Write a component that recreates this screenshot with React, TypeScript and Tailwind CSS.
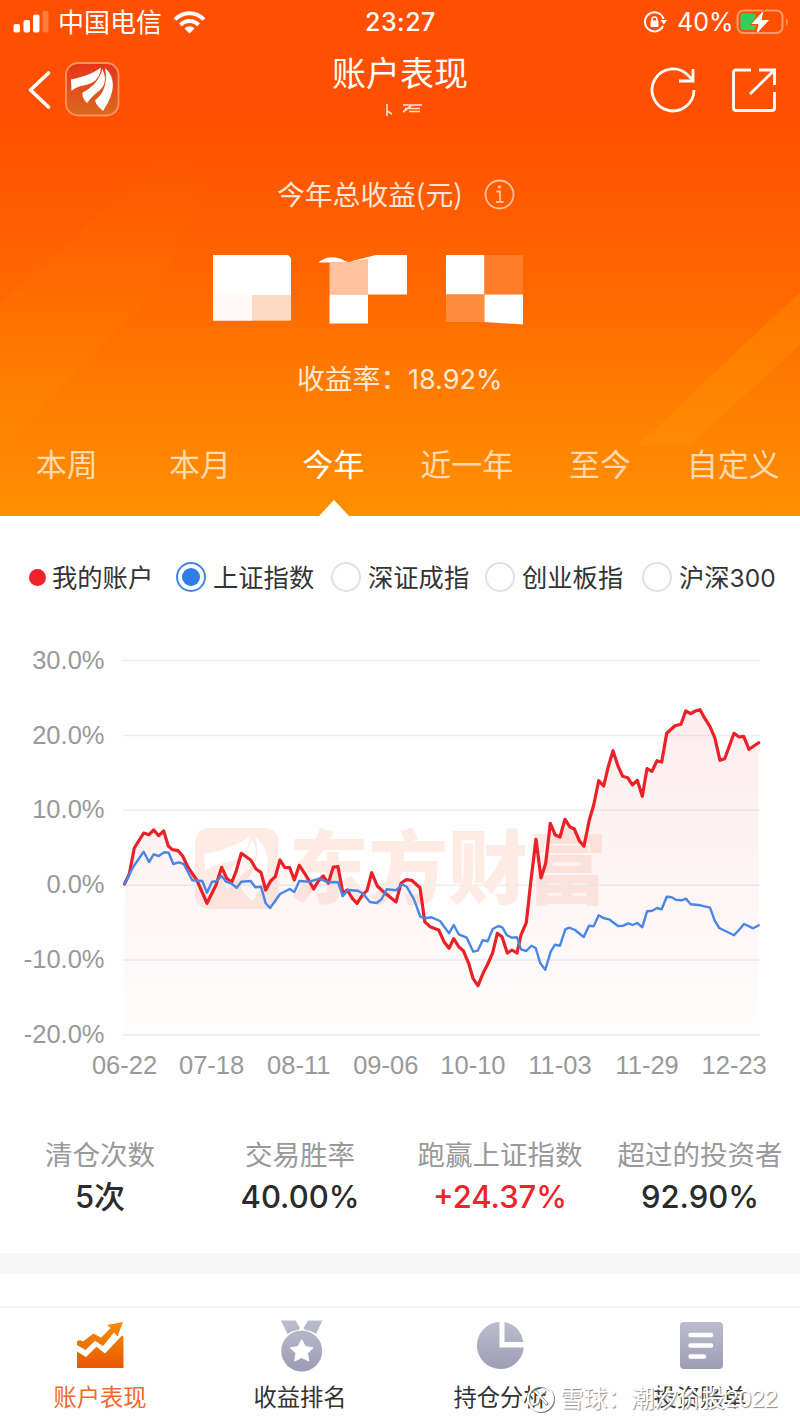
import React from "react";

interface Index {
  name: string;
  checked: boolean;
  width: string;
}

interface Stat {
  label: string;
  value: string;
  color: string;
}

const periods = ["本周", "本月", "今年", "近一年", "至今", "自定义"];

const indexes: Index[] = [
  { name: "上证指数", checked: true, width: "w-[155px]" },
  { name: "深证成指", checked: false, width: "w-[154px]" },
  { name: "创业板指", checked: false, width: "w-[157px]" },
  { name: "沪深300", checked: false, width: "w-[140px]" },
];

const stats: Stat[] = [
  { label: "清仓次数", value: "5次", color: "text-[#2b2b2b]" },
  { label: "交易胜率", value: "40.00%", color: "text-[#2b2b2b]" },
  { label: "跑赢上证指数", value: "+24.37%", color: "text-[#f0222b]" },
  { label: "超过的投资者", value: "92.90%", color: "text-[#2b2b2b]" },
];

const yTicks = [
  { label: "30.0%", y: 660.5 },
  { label: "20.0%", y: 735.5 },
  { label: "10.0%", y: 810.3 },
  { label: "0.0%", y: 885.3 },
  { label: "-10.0%", y: 960 },
  { label: "-20.0%", y: 1035 },
];

const xTicks = ["06-22", "07-18", "08-11", "09-06", "10-10", "11-03", "11-29", "12-23"];

const accountLine =
  "124.5,884 129.3,874 134.3,848 143.7,833 149,834.7 153.7,830 158.7,835.7 163.7,831 168.3,846 172.3,849.7 178,850.7 182.7,856 187.7,866.7 197.3,881 207,903.3 216,885 221.7,867.3 226.7,878.3 231.7,882.3 236,871.7 241.3,853.3 250.7,860 256,869 261,872.3 265.7,890 270.7,881 275.3,876.7 280,860 284.7,867.3 289.7,867.7 294.3,880 299.3,865.3 306.7,876.7 313.7,889 318.3,881 323.3,876 328.3,883.3 333.3,867 338,866.7 343,893.3 347.3,890 352.3,898.3 357,903.3 362.7,894.7 367,890.7 371.7,872.7 377.3,886 382.3,890.7 396,902 401,883.3 406,879.7 411.7,880.3 420,887.7 424.8,921.8 430,926.7 438.7,930 444,941.7 449,948.3 453.7,938.7 458.7,946.7 463.3,950.7 468.7,963.3 473,978.3 478,985.7 483,973.3 487.3,965 492.7,952.7 497.3,933.3 502,936.7 507.3,953 512,950 517,953 521,935 526.3,922.7 531,880 536,839.3 541,878 545.7,863.3 550.3,823.3 555.3,835 560,837 565,819.3 569.7,826.7 574.3,829 579.3,840.7 584,846.3 589.3,820 593.7,805 598.7,780.7 603.7,786 608.3,766.7 613,750.7 618,766 622.7,776.3 627.7,777.7 632.3,785 637.3,780.3 642.3,796.3 647,768.7 652,771.3 657,760.7 661.7,762 666.7,733.3 675,725.7 681,724.3 685.7,711 690.7,713.7 695.3,711 700,709.7 705,718.7 710,726.7 714.7,737.3 720,760.3 724.7,758.7 734,733.3 739,737 743.7,736.3 749,749.3 758.7,742.7";

const indexLine =
  "124.5,884 133.3,866.7 143.7,851.7 149,862 153.7,854.3 158.7,856 164.3,852.3 168.7,852.7 173.3,864 178.7,862.3 183.7,864 192.3,880.3 202.3,881 207,892.7 212,881.7 216,881.3 221.7,876 226,881.7 231.7,883.7 236.7,887.7 241.3,881.7 250.7,881 255.3,887.3 261,886.7 265.7,903.3 270,908 275.3,900.7 280,894 289.7,889 294.3,892 299.3,881 310,881.7 319,878.7 328.3,882.3 338,882 342.7,896.3 348,890 357.7,890.7 362.7,893.3 370,902 376.7,903 381.7,899 386.7,889.3 396,890.3 402,884.3 406.7,886.7 414,899.3 420.3,916.7 425,918.3 431.7,917.3 440,921 449,933.3 453.7,925 458.7,934.3 466.7,937.7 473.3,951.7 477.7,950.7 482.7,940.3 487.7,941.3 492.7,929 498.3,926 502.3,927.3 506.7,935 511.7,937.7 517,937.3 521,949.3 526.3,951 531.3,945.7 535.7,948 540.3,963.3 545.3,969.7 550.7,951.7 555,944.7 560,945.7 565.3,929.3 569.3,927.7 575,930 583.7,937 589,925.7 593.7,926.3 598.7,915.3 603.3,918 609,919.3 618,926 623.3,925.7 628.3,923.3 632.7,925 637.3,923 642.3,927.3 647,911.3 652.3,910.7 657,908 661.7,909.3 666.7,896.7 671.7,897.3 676,899.7 681.7,900.3 686,898.7 690.7,904.3 700.3,905.3 710,907.7 714.7,920.7 719.3,928 734,935.3 739,930 744,924 753.3,928.3 758.7,925.3";

function BrandStrokes({ fill }: { fill: string }) {
  return (
    <g fill={fill}>
      <path d="M6 17.500 C15 15.500 26 13 36 5.500 C35 18 27 22 18.500 23.500 C13.500 24.500 9.500 26 6.500 29 Z" />
      <path d="M37.500 7 C41.500 16 40.500 23 35 28 C30.500 31.500 26.500 35 22 41 C19 38 17 34.500 17.500 30.500 C27 26 34.500 18 37.500 7 Z" />
      <path d="M40 6 C48 13 49 22 47 30 C45 38 41 44 38 49 C35 46 31 43 30 38.500 C38.500 32 43 21 40 6 Z" />
    </g>
  );
}

function StatusBar() {
  return (
    <div className="relative flex h-[44px] items-center justify-between pl-[13px] pr-[11px] text-white">
      <div className="flex items-center">
        <svg width="36" height="22" viewBox="0 -2 36 22" fill="white">
          <rect x="0.500" y="11" width="6.500" height="8.500" rx="2" />
          <rect x="10.500" y="7" width="6.500" height="12.500" rx="2" />
          <rect x="20" y="1.500" width="6.500" height="18" rx="2" />
          <rect x="29.500" y="-2" width="6" height="21.500" rx="2" opacity="0.25" />
        </svg>
        <span className="ml-[9px] pb-[2px] text-[26px] leading-[42px]">中国电信</span>
        <svg className="ml-[11px]" width="33" height="24" viewBox="0 0 33 24" fill="none" stroke="white" strokeWidth="4">
          <path d="M2 9.500 C10 1 23 1 31 9.500" />
          <path d="M7.500 15 C12.500 9.800 20.500 9.800 25.500 15" />
          <path d="M11.500 18.500 C14.500 15.500 18.500 15.500 21.500 18.500 L16.500 23.500 Z" fill="white" stroke="none" />
        </svg>
      </div>
      <span className="absolute left-[365px] top-0 font-[Inter] text-[25px] font-medium leading-[44px] tracking-[0.5px]">23:27</span>
      <div className="flex items-center">
        <svg width="24" height="24" viewBox="0 0 24 24" fill="none" stroke="white">
          <path d="M20 16 A 9.500 9.500 0 1 1 20.500 9" strokeWidth="2" />
          <path d="M17.500 10 H24 L20.800 14.500 Z" fill="white" stroke="none" />
          <rect x="7.500" y="10.500" width="8" height="6.500" rx="1" fill="white" stroke="none" />
          <path d="M9 11 V9.500 A2.500 2.500 0 0 1 14 9.500 V11" strokeWidth="1.500" />
        </svg>
        <span className="ml-[10px] w-[55px] whitespace-nowrap font-[Inter] text-[25px] leading-[44px]">40%</span>
        <svg className="ml-[4px]" width="53" height="28" viewBox="0 0 53 28">
          <rect x="1.500" y="2.500" width="45" height="22.500" rx="6" fill="none" stroke="#ff9a6c" strokeWidth="2" />
          <path d="M50 10 C52.500 11.500 52.500 16 50 17.500 Z" fill="#ff9a6c" />
          <rect x="4.500" y="5.500" width="15" height="16.500" rx="2" fill="#30d158" />
          <path d="M28.500 1 L14.500 16.500 H22 L19.500 27.500 L34 11.500 H26 Z" fill="white" stroke="#ff4f00" strokeWidth="1" />
        </svg>
      </div>
    </div>
  );
}

function NavBar() {
  return (
    <div className="flex h-[86px] text-white">
      <div className="flex w-[260px] pl-[27px] pt-[18px]">
        <svg className="mt-[8px]" width="26" height="40" viewBox="0 0 26 40" fill="none" stroke="white" strokeWidth="3.600" strokeLinecap="round" strokeLinejoin="round">
          <path d="M21.500 3 L3.500 20 L21.500 37" />
        </svg>
        <svg className="ml-[12px]" width="55" height="55" viewBox="0 0 55 55">
          <defs>
            <linearGradient id="brand" x1="0" y1="0" x2="0" y2="1">
              <stop offset="0" stopColor="#e5341b" />
              <stop offset="1" stopColor="#dc6a1d" />
            </linearGradient>
          </defs>
          <rect x="1" y="1" width="52.500" height="52.500" rx="12" fill="url(#brand)" stroke="#ff9460" strokeWidth="1.800" />
          <BrandStrokes fill="white" />
        </svg>
      </div>
      <div className="flex w-[280px] flex-col items-center">
        <h1 className="pb-[3px] text-[34px] leading-[55px]">账户表现</h1>
        {/* Masked account name */}
        <svg className="ml-[7px]" width="40" height="14" viewBox="0 0 40 14" fill="none" stroke="#ffe3d6" strokeWidth="1.600">
          <path d="M3 2 V14 M3 9 L8 12" />
          <path d="M19 3 H38 M21 6.500 H36 M28 3 L19 10 M25 9.500 H36" />
        </svg>
      </div>
      <div className="flex w-[260px] justify-end pr-[23px] pt-[23px]">
        <svg width="46" height="46" viewBox="0 0 46 46" fill="none" stroke="white" strokeWidth="2.800">
          <path d="M44 23 A 21 21 0 1 1 38 8.200 L43 13" />
          <path d="M43 2 V14 H29" />
        </svg>
        <svg className="ml-[35px]" width="46" height="46" viewBox="0 0 46 46" fill="none" stroke="white" strokeWidth="2.800">
          <path d="M20 3 H5 Q2.500 3 2.500 5.500 V41 Q2.500 43.500 5 43.500 H41 Q43.500 43.500 43.500 41 V25" />
          <path d="M28 3 H43.500 V18 M43 3.500 L19 27" />
        </svg>
      </div>
    </div>
  );
}

function Header() {
  return (
    <header className="relative h-[516px] bg-[linear-gradient(180deg,#ff4f00_0px,#ff4f00_110px,#ff6700_290px,#ff7a00_380px,#ff8f00_516px)]">
      <svg className="absolute left-0 top-0" width="800" height="516" viewBox="0 0 800 516">
        <defs>
          <linearGradient id="beam" x1="0" y1="0" x2="0" y2="1">
            <stop offset="0" stopColor="#ff9500" stopOpacity="0" />
            <stop offset="1" stopColor="#ff9500" stopOpacity="0.35" />
          </linearGradient>
        </defs>
        <path d="M180 140 L0 305 V450 L160 285 L205 185 Z" fill="url(#beam)" opacity="0.5" />
        <path d="M800 292 L638 445 H690 L800 345 Z" fill="#ff9500" opacity="0.35" />
      </svg>
      <div className="relative flex h-full flex-col">
        <StatusBar />
        <NavBar />
        <div className="mt-[44px] flex h-[40px] items-center pl-[277px] text-[#ffe6d8]">
          <span className="w-[207px] whitespace-nowrap pb-[2px] text-[27.800px] leading-[38px]">今年总收益(元)</span>
          <svg width="31" height="31" viewBox="0 0 31 31" fill="none" stroke="#ffc09a" strokeWidth="1.800">
            <circle cx="15.500" cy="15.500" r="14" />
            <path d="M12.500 12.500 H16 V22.500 M12 23 H19.500" />
            <circle cx="15.500" cy="8" r="1.800" fill="#ffc09a" stroke="none" />
          </svg>
        </div>
        {/* Amount hidden behind mosaic blocks */}
        <svg className="mt-[37px] shrink-0" width="800" height="78" viewBox="0 251 800 78">
          <path d="M213 255 H288 L291 258 V320.500 H213 Z" fill="white" />
          <rect x="213" y="295" width="39" height="25.500" fill="#fffaf7" />
          <rect x="252" y="295" width="39" height="25" fill="#fdd9c2" />
          <path d="M318 262.500 Q331 253 345 261 L350 262.500 Z" fill="white" />
          <path d="M329.500 262.500 H346 L368 258 V294.500 H329.500 Z" fill="#ffc29f" />
          <path d="M350 261.500 L376 255 H407 V294.500 H368 V259 Z" fill="white" />
          <rect x="329.500" y="294.500" width="38.500" height="29" fill="white" />
          <rect x="446" y="255" width="38.500" height="39.500" fill="white" />
          <rect x="484.500" y="255" width="38.500" height="39.500" fill="#ff7d2b" />
          <rect x="446" y="294.500" width="38.500" height="27.500" fill="#ff8e3c" />
          <path d="M484.500 294.500 H523 V324.500 L484.500 322 Z" fill="white" />
        </svg>
        <div className="mt-[30px] flex h-[40px] items-center pl-[297px] text-[27.800px] leading-[37px] text-[#ffe9d6]">
          <span className="w-[111px] whitespace-nowrap pb-[3px]">收益率：</span>
          <span className="font-[Inter] text-[27px]">18.92%</span>
        </div>
        <nav className="mt-[34px] grid grid-cols-6">
          {periods.map((period) => (
            <div
              key={period}
              className={`whitespace-nowrap text-center text-[31px] leading-[60px] ${
                period === "今年" ? "text-white" : "text-[#ffd9b0]"
              }`}
            >
              {period}
            </div>
          ))}
        </nav>
      </div>
      <svg className="absolute bottom-0 left-[318px]" width="32" height="16" viewBox="0 0 32 16">
        <path d="M1 16 L16 0 L31 16 Z" fill="white" />
      </svg>
    </header>
  );
}

function Legend() {
  return (
    <div className="flex h-[122px] items-center pl-[29px] text-[25.300px] leading-[38px] text-[#333333]">
      <div className="flex w-[147px] items-center gap-[6px] whitespace-nowrap">
        <span className="h-[17px] w-[17px] rounded-full bg-[#f0222b]" />
        <span className="pb-[2px]">我的账户</span>
      </div>
      {indexes.map((index) => (
        <div key={index.name} className={`flex shrink-0 items-center gap-[7px] whitespace-nowrap ${index.width}`}>
          <span
            className={`flex h-[30px] w-[30px] shrink-0 items-center justify-center rounded-full border-2 ${
              index.checked ? "border-[#4186e8]" : "border-[#dfe0e8]"
            }`}
          >
            {index.checked && <span className="h-[18px] w-[18px] rounded-full bg-[#2f7de6]" />}
          </span>
          {index.name === "沪深300" ? (
            <span>
              沪深<span className="font-[Inter] text-[24.500px]">300</span>
            </span>
          ) : (
            <span className="pb-[2px]">{index.name}</span>
          )}
        </div>
      ))}
    </div>
  );
}

function Chart() {
  return (
    <svg className="block" width="800" height="452" viewBox="0 638 800 452">
      <defs>
        <linearGradient id="area" gradientUnits="userSpaceOnUse" x1="0" y1="710" x2="0" y2="1035">
          <stop offset="0" stopColor="#f0222b" stopOpacity="0.08" />
          <stop offset="1" stopColor="#f0222b" stopOpacity="0.01" />
        </linearGradient>
      </defs>
      <g transform="translate(195 828) scale(1.52 1.5)">
        <rect width="55" height="54" rx="9" fill="#fdebe4" />
        <BrandStrokes fill="white" />
      </g>
      <text x="289" y="897" fontSize="79.500" fontWeight="900" fill="#fdebe4">
        东方财富
      </text>
      {yTicks.map((tick) => (
        <g key={tick.label}>
          <line x1="123" x2="760" y1={tick.y} y2={tick.y} stroke="#ededf2" strokeWidth="1.500" />
          <text x="104.500" y={tick.y + 8} textAnchor="end" fontSize="25.500" fill="#999999" fontFamily="Liberation Sans, sans-serif">
            {tick.label}
          </text>
        </g>
      ))}
      <polygon points={`${accountLine} 758.7,1035 124.5,1035`} fill="url(#area)" />
      <polyline points={accountLine} fill="none" stroke="#ea2127" strokeWidth="3.200" strokeLinejoin="round" strokeLinecap="round" />
      <polyline points={indexLine} fill="none" stroke="#4a86e6" strokeWidth="2.400" strokeLinejoin="round" strokeLinecap="round" />
      {xTicks.map((label, i) => (
        <text key={label} x={124.5 + i * 87.1} y="1073.500" textAnchor="middle" fontSize="25.500" fill="#999999" fontFamily="Liberation Sans, sans-serif">
          {label}
        </text>
      ))}
    </svg>
  );
}

function Stats() {
  return (
    <div className="grid h-[163px] grid-cols-4 pt-[43px]">
      {stats.map((stat) => (
        <div key={stat.label} className="flex flex-col items-center whitespace-nowrap">
          <span className="pb-[2px] text-[27.500px] leading-[40px] text-[#999999]">{stat.label}</span>
          <span className={`font-[Inter,'Noto_Sans_CJK_SC'] text-[31px] font-medium leading-[44px] ${stat.color}`}>{stat.value}</span>
        </div>
      ))}
    </div>
  );
}

function TabBar() {
  return (
    <footer className="relative grid h-[118px] grid-cols-4 border-t-2 border-[#f4f4f5] pt-[12px] text-[23.300px] leading-[36px] text-[#333333]">
      <svg className="absolute h-0 w-0">
        <defs>
          <linearGradient id="hot" gradientUnits="userSpaceOnUse" x1="0" y1="0" x2="0" y2="50">
            <stop offset="0" stopColor="#f58f07" />
            <stop offset="1" stopColor="#ea5504" />
          </linearGradient>
          <linearGradient id="cool" gradientUnits="userSpaceOnUse" x1="0" y1="0" x2="0" y2="52">
            <stop offset="0" stopColor="#bdbdcf" />
            <stop offset="1" stopColor="#9d9bb3" />
          </linearGradient>
        </defs>
      </svg>
      <div className="flex flex-col items-center text-[#f0692a]">
        <svg width="50" height="52" viewBox="0 0 50 52" fill="url(#hot)">
          <path d="M2 21.500 Q4 19 8 21.500 L18.500 13.500 L26 17.700 L35.700 8 L32 5 L48 2 L42.500 16.500 L39 12.500 L28 26 L20 20.700 L10.500 30 L2 25 Z" />
          <path d="M2 31.500 L11 37 L21.500 26.800 L30 33.500 L46.500 16 Q48.500 15 48.500 18 V48 H2 Z" />
        </svg>
        <span className="mt-[6px]">账户表现</span>
      </div>
      <div className="flex flex-col items-center">
        <svg width="50" height="52" viewBox="0 0 50 52" fill="url(#cool)">
          <path d="M6 0.500 H20.500 L25 8 L23.500 10 Q17 10.500 12.500 14 Z" />
          <path d="M47.500 0.500 H33 L28.500 8 L30 10 Q36.500 10.500 41 14 Z" />
          <circle cx="26.700" cy="31" r="20.500" />
          <path d="M26.700 19.500 L30.300 26.500 L38 27.700 L32.500 33.300 L33.700 41 L26.700 37.500 L19.700 41 L20.900 33.300 L15.400 27.700 L23.100 26.500 Z" fill="white" stroke="white" strokeLinejoin="round" />
        </svg>
        <span className="mt-[6px]">收益排名</span>
      </div>
      <div className="flex flex-col items-center">
        <svg width="50" height="52" viewBox="0 0 50 52" fill="url(#cool)">
          <path d="M24.500 2 A23.500 23.500 0 1 0 48.800 27.500 H24.500 Z" />
          <path d="M29.500 2 Q45 5 48.500 22 H29.500 Z" />
        </svg>
        <span className="mt-[6px]">持仓分析</span>
      </div>
      <div className="flex flex-col items-center">
        <svg width="50" height="52" viewBox="0 0 50 52">
          <rect x="5" y="2" width="43" height="47" rx="4" fill="url(#cool)" />
          <path d="M15.500 15 H36 M15.500 25.500 H36 M15.500 36.500 H29" stroke="white" strokeWidth="4.500" strokeLinecap="round" />
        </svg>
        <span className="mt-[6px]">投资账单</span>
      </div>
      <div className="absolute left-[526px] top-[73px] flex items-center gap-[4px] whitespace-nowrap text-[23.600px] leading-[36px] text-white [text-shadow:1px_1px_1px_#888888]">
        <svg width="30" height="30" viewBox="0 0 30 30" fill="none" strokeLinecap="round">
          <circle cx="15.500" cy="15.500" r="12.500" stroke="#777777" strokeWidth="2" />
          <circle cx="14.500" cy="14.500" r="12.500" stroke="white" strokeWidth="2" />
          <path d="M10 8 L21 20 M19 8 Q12 12 13 16 Q13 20 8 21" stroke="#666666" strokeWidth="3" />
          <path d="M9.500 7.500 L20.500 19.500 M18.500 7.500 Q11.500 11.500 12.500 15.500 Q12.500 19.500 7.500 20.500" stroke="white" strokeWidth="2" />
        </svg>
        <span className="font-['Liberation_Sans','Noto_Sans_CJK_SC',sans-serif]">雪球：潮汐价投2022</span>
      </div>
    </footer>
  );
}

export default function App() {
  return (
    <div className="h-[1424px] w-[800px] overflow-hidden bg-[#fefefe] font-['Noto_Sans_CJK_SC',sans-serif]">
      <Header />
      <Legend />
      <Chart />
      <Stats />
      <div className="h-[21px] bg-[#f7f7f7]" />
      <div className="h-[32px]" />
      <TabBar />
    </div>
  );
}
